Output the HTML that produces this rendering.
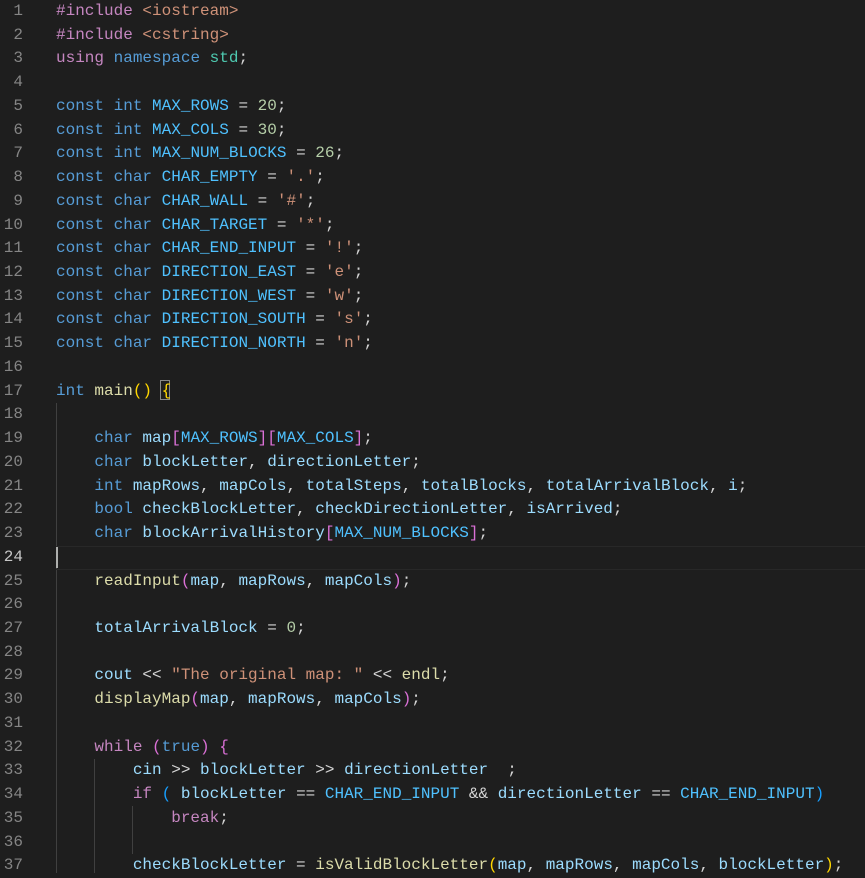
<!DOCTYPE html>
<html><head><style>
body{margin:0;background:#1e1e1e;width:865px;height:873px;overflow:hidden;position:relative;font-family:"Liberation Mono",monospace;font-size:16px}
.l{position:absolute;left:0;height:23.73px;line-height:23.73px;white-space:pre;width:865px}
.n{position:absolute;right:842px;color:#858585;text-align:right}
.c{position:absolute;left:56px;color:#d4d4d4}
.k{color:#569cd6}.p{color:#c586c0}.v{color:#9cdcfe}.C{color:#4fc1ff}.num{color:#b5cea8}.s{color:#ce9178}.f{color:#dcdcaa}.t{color:#4ec9b0}
.b1{color:#ffd700}.b2{color:#da70d6}.b3{color:#179fff}
.g{position:absolute;width:1px;background:#404040}
</style></head><body>
<div class="g" style="left:56px;top:403px;height:470px"></div>
<div class="g" style="left:94px;top:759px;height:114px"></div>
<div class="g" style="left:132px;top:806px;height:48px"></div>
<div style="position:absolute;left:56px;top:546px;width:809px;height:22px;border-top:1px solid #282828;border-bottom:1px solid #282828"></div>
<div style="position:absolute;left:56px;top:547px;width:2px;height:21px;background:#aeafad"></div>
<div style="position:absolute;left:160px;top:380px;width:10px;height:20px;border:1px solid #888;box-sizing:border-box"></div>
<div id="code"></div>
<script>
const L=[
'<span class="p">#include</span> <span class="s">&lt;iostream&gt;</span>',
'<span class="p">#include</span> <span class="s">&lt;cstring&gt;</span>',
'<span class="p">using</span> <span class="k">namespace</span> <span class="t">std</span>;',
'',
'<span class="k">const</span> <span class="k">int</span> <span class="C">MAX_ROWS</span> = <span class="num">20</span>;',
'<span class="k">const</span> <span class="k">int</span> <span class="C">MAX_COLS</span> = <span class="num">30</span>;',
'<span class="k">const</span> <span class="k">int</span> <span class="C">MAX_NUM_BLOCKS</span> = <span class="num">26</span>;',
'<span class="k">const</span> <span class="k">char</span> <span class="C">CHAR_EMPTY</span> = <span class="s">\'.\'</span>;',
'<span class="k">const</span> <span class="k">char</span> <span class="C">CHAR_WALL</span> = <span class="s">\'#\'</span>;',
'<span class="k">const</span> <span class="k">char</span> <span class="C">CHAR_TARGET</span> = <span class="s">\'*\'</span>;',
'<span class="k">const</span> <span class="k">char</span> <span class="C">CHAR_END_INPUT</span> = <span class="s">\'!\'</span>;',
'<span class="k">const</span> <span class="k">char</span> <span class="C">DIRECTION_EAST</span> = <span class="s">\'e\'</span>;',
'<span class="k">const</span> <span class="k">char</span> <span class="C">DIRECTION_WEST</span> = <span class="s">\'w\'</span>;',
'<span class="k">const</span> <span class="k">char</span> <span class="C">DIRECTION_SOUTH</span> = <span class="s">\'s\'</span>;',
'<span class="k">const</span> <span class="k">char</span> <span class="C">DIRECTION_NORTH</span> = <span class="s">\'n\'</span>;',
'',
'<span class="k">int</span> <span class="f">main</span><span class="b1">()</span> <span class="b1">{</span>',
'',
'    <span class="k">char</span> <span class="v">map</span><span class="b2">[</span><span class="C">MAX_ROWS</span><span class="b2">][</span><span class="C">MAX_COLS</span><span class="b2">]</span>;',
'    <span class="k">char</span> <span class="v">blockLetter</span>, <span class="v">directionLetter</span>;',
'    <span class="k">int</span> <span class="v">mapRows</span>, <span class="v">mapCols</span>, <span class="v">totalSteps</span>, <span class="v">totalBlocks</span>, <span class="v">totalArrivalBlock</span>, <span class="v">i</span>;',
'    <span class="k">bool</span> <span class="v">checkBlockLetter</span>, <span class="v">checkDirectionLetter</span>, <span class="v">isArrived</span>;',
'    <span class="k">char</span> <span class="v">blockArrivalHistory</span><span class="b2">[</span><span class="C">MAX_NUM_BLOCKS</span><span class="b2">]</span>;',
'',
'    <span class="f">readInput</span><span class="b2">(</span><span class="v">map</span>, <span class="v">mapRows</span>, <span class="v">mapCols</span><span class="b2">)</span>;',
'',
'    <span class="v">totalArrivalBlock</span> = <span class="num">0</span>;',
'',
'    <span class="v">cout</span> &lt;&lt; <span class="s">"The original map: "</span> &lt;&lt; <span class="f">endl</span>;',
'    <span class="f">displayMap</span><span class="b2">(</span><span class="v">map</span>, <span class="v">mapRows</span>, <span class="v">mapCols</span><span class="b2">)</span>;',
'',
'    <span class="p">while</span> <span class="b2">(</span><span class="k">true</span><span class="b2">)</span> <span class="b2">{</span>',
'        <span class="v">cin</span> &gt;&gt; <span class="v">blockLetter</span> &gt;&gt; <span class="v">directionLetter</span>  ;',
'        <span class="p">if</span> <span class="b3">(</span> <span class="v">blockLetter</span> == <span class="C">CHAR_END_INPUT</span> &amp;&amp; <span class="v">directionLetter</span> == <span class="C">CHAR_END_INPUT</span><span class="b3">)</span>',
'            <span class="p">break</span>;',
'',
'        <span class="v">checkBlockLetter</span> = <span class="f">isValidBlockLetter</span><span class="b1">(</span><span class="v">map</span>, <span class="v">mapRows</span>, <span class="v">mapCols</span>, <span class="v">blockLetter</span><span class="b1">)</span>;'
];
let h='';
L.forEach((s,i)=>{h+=`<div class="l" style="top:${(i*23.73).toFixed(2)}px"><span class="n" style="${i==23?'color:#c6c6c6':''}">${i+1}</span><span class="c">${s}</span></div>`});
document.getElementById('code').innerHTML=h;
</script>
</body></html>
